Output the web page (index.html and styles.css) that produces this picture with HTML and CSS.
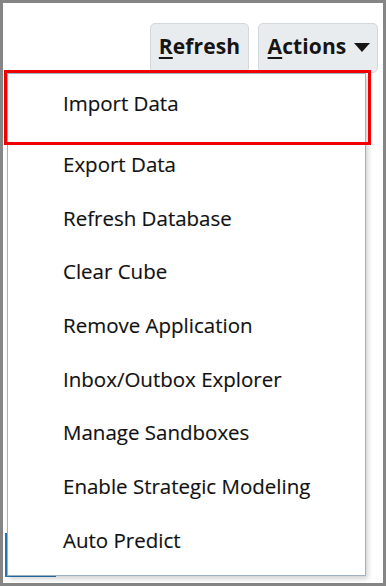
FILE: index.html
```html
<!DOCTYPE html>
<html>
<head>
<meta charset="utf-8">
<link rel="stylesheet" href="styles.css">
</head>
<body>
<div class="frame">
  <div class="toolbar">
    <button class="btn btn-refresh"><span class="label"><span class="mn">R</span>efresh</span></button>
    <button class="btn btn-actions"><span class="label"><span class="mn">A</span>ctions</span>
      <svg class="caret" width="16" height="9" viewBox="0 0 16 9"><path d="M0 0 H16 L8 9 Z" fill="#161513"/></svg>
    </button>
  </div>
  <div class="tab-edge"></div>
  <ul class="menu">
    <li class="item first">Import Data</li>
    <li class="item">Export Data</li>
    <li class="item">Refresh Database</li>
    <li class="item">Clear Cube</li>
    <li class="item">Remove Application</li>
    <li class="item">Inbox/Outbox Explorer</li>
    <li class="item">Manage Sandboxes</li>
    <li class="item">Enable Strategic Modeling</li>
    <li class="item">Auto Predict</li>
  </ul>
  <div class="highlight"></div>
</div>
</body>
</html>
```

FILE: styles.css
```css
html, body {
  margin: 0;
  padding: 0;
  background: #ffffff;
}
.frame {
  position: relative;
  box-sizing: border-box;
  width: 386px;
  height: 586px;
  border: 3px solid #858585;
  background: #ffffff;
  font-family: "Open Sans", "Noto Sans", sans-serif;
  color: #161513;
}
.toolbar {
  display: flex;
  justify-content: flex-end;
  gap: 9px;
  padding: 20px 5px 0 0;
}
.btn {
  box-sizing: border-box;
  height: 50px;
  display: flex;
  align-items: center;
  justify-content: center;
  gap: 8px;
  padding: 0 0 4px 0;
  background: #e9ecee;
  border: 1px solid #d3d8dc;
  border-radius: 5px;
  font-family: "Open Sans", "Noto Sans", sans-serif;
  font-weight: 700;
  font-size: 21px;
  color: #161513;
  letter-spacing: 0.1px;
}
.btn-refresh {
  width: 99px;
}
.btn-actions {
  width: 120px;
  padding-left: 2px;
}
.label {
  white-space: nowrap;
}
.mn {
  text-decoration: underline;
  text-decoration-thickness: 2px;
  text-underline-offset: 3px;
}
.caret {
  display: block;
  flex-shrink: 0;
  width: 16px;
  height: 9px;
  margin-top: 3px;
}
.tab-edge {
  position: absolute;
  left: 2px;
  top: 530px;
  width: 48px;
  height: 40px;
  border-left: 3px solid #2a77b3;
  border-bottom: 4px solid #2a77b3;
}
.menu {
  position: absolute;
  left: 4px;
  top: 70px;
  width: 359px;
  height: 503px;
  box-sizing: border-box;
  margin: 0;
  padding: 0 0 8px 0;
  list-style: none;
  background: #ffffff;
  border: 1px solid #9fb2c4;
  box-shadow: 2px 3px 5px rgba(0, 0, 0, 0.18);
}
.item {
  display: flex;
  align-items: center;
  height: 53.7px;
  padding-left: 55px;
  font-size: 20.5px;
  color: #111111;
  white-space: nowrap;
  -webkit-text-stroke: 0.15px #111111;
}
.item.first {
  height: 63px;
  padding-bottom: 5px;
  box-sizing: border-box;
}
.highlight {
  position: absolute;
  left: 1px;
  top: 67px;
  width: 361px;
  height: 69px;
  border: 3px solid #f00000;
}
```
